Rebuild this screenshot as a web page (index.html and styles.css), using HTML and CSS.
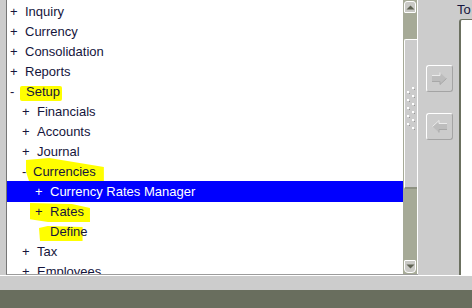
FILE: index.html
```html
<!DOCTYPE html>
<html>
<head>
<meta charset="utf-8">
<link rel="stylesheet" href="styles.css">
</head>
<body>
<div class="screen">
  <div class="main">
    <div class="gutter"></div>
    <div class="tree">
      <ul class="list">
        <li class="row l0"><span class="sign">+</span><span class="label">Inquiry</span></li>
        <li class="row l0"><span class="sign">+</span><span class="label">Currency</span></li>
        <li class="row l0"><span class="sign">+</span><span class="label">Consolidation</span></li>
        <li class="row l0"><span class="sign">+</span><span class="label">Reports</span></li>
        <li class="row l0 open"><span class="sign">-</span><span class="label mark mark-setup">Setup</span></li>
        <li class="row l1"><span class="sign">+</span><span class="label">Financials</span></li>
        <li class="row l1"><span class="sign">+</span><span class="label">Accounts</span></li>
        <li class="row l1"><span class="sign">+</span><span class="label">Journal</span></li>
        <li class="row l1 open"><span class="sign">-</span><span class="label mark mark-currencies">Currencies</span></li>
        <li class="row l2 selected"><span class="sign">+</span><span class="label">Currency Rates Manager</span></li>
        <li class="row l2"><span class="sign">+</span><span class="label mark mark-rates">Rates</span></li>
        <li class="row l2"><span class="sign"></span><span class="label mark mark-define">Define</span></li>
        <li class="row l1"><span class="sign">+</span><span class="label">Tax</span></li>
        <li class="row l1"><span class="sign">+</span><span class="label">Employees</span></li>
      </ul>
      <div class="scrollbar">
        <div class="sb-btn sb-up">
          <svg width="9" height="5" viewBox="0 0 9 5"><path d="M0.5 4.5 L4.5 0.5 L8.5 4.5 Z" fill="#5e6252"/></svg>
        </div>
        <div class="sb-track sb-track-top"></div>
        <div class="sb-thumb">
          <svg class="grip" width="10" height="46" viewBox="0 0 10 46">
            <g fill="#ffffff">
              <rect x="6" y="0" width="2" height="2"/><rect x="1" y="4" width="2" height="2"/>
              <rect x="6" y="8" width="2" height="2"/><rect x="1" y="12" width="2" height="2"/>
              <rect x="6" y="16" width="2" height="2"/><rect x="1" y="20" width="2" height="2"/>
              <rect x="6" y="24" width="2" height="2"/><rect x="1" y="28" width="2" height="2"/>
              <rect x="6" y="32" width="2" height="2"/><rect x="1" y="36" width="2" height="2"/>
              <rect x="6" y="40" width="2" height="2"/>
            </g>
            <g fill="#9a9a9a">
              <rect x="8" y="2" width="1" height="1"/><rect x="3" y="6" width="1" height="1"/>
              <rect x="8" y="10" width="1" height="1"/><rect x="3" y="14" width="1" height="1"/>
              <rect x="8" y="18" width="1" height="1"/><rect x="3" y="22" width="1" height="1"/>
              <rect x="8" y="26" width="1" height="1"/><rect x="3" y="30" width="1" height="1"/>
              <rect x="8" y="34" width="1" height="1"/><rect x="3" y="38" width="1" height="1"/>
              <rect x="8" y="42" width="1" height="1"/>
            </g>
          </svg>
        </div>
        <div class="sb-track sb-track-bottom"></div>
        <div class="sb-btn sb-down">
          <svg width="9" height="5" viewBox="0 0 9 5"><path d="M0.5 0.5 L8.5 0.5 L4.5 4.5 Z" fill="#5e6252"/></svg>
        </div>
      </div>
    </div>
    <div class="side">
      <div class="move-buttons">
        <div class="move-btn">
          <svg width="25" height="25" viewBox="0 0 25 25">
            <path d="M5 9.5 H13 V6.5 L19.5 12.5 L13 18.5 V15.5 H5 Z" fill="#bdbdbd"/>
            <path d="M5 9.5 H13 V6.5" fill="none" stroke="#ececec" stroke-width="1"/>
            <path d="M19.5 12.5 L13 18.5 V15.5 H5" fill="none" stroke="#a8a8a8" stroke-width="1"/>
          </svg>
        </div>
        <div class="move-btn">
          <svg width="25" height="25" viewBox="0 0 25 25">
            <path d="M20 9.5 H12 V6.5 L5.5 12.5 L12 18.5 V15.5 H20 Z" fill="#bdbdbd"/>
            <path d="M20 9.5 H12 V6.5 L5.5 12.5" fill="none" stroke="#ececec" stroke-width="1"/>
            <path d="M12 18.5 V15.5 H20" fill="none" stroke="#a8a8a8" stroke-width="1"/>
          </svg>
        </div>
      </div>
      <div class="to-panel">
        <div class="to-label">To</div>
        <div class="to-box"></div>
      </div>
    </div>
  </div>
  <div class="band"></div>
  <div class="footer"></div>
</div>
</body>
</html>
```

FILE: styles.css
```css
* { box-sizing: border-box; }

html, body {
  margin: 0;
  padding: 0;
  background: #cccccc;
}

body {
  font-family: "Liberation Sans", Arial, sans-serif;
  font-size: 13px;
}

.screen {
  width: 472px;
  height: 308px;
  display: flex;
  flex-direction: column;
  overflow: hidden;
}

.main {
  height: 276px;
  flex-shrink: 0;
  display: flex;
  border-bottom: 1px solid #ffffff;
}

.gutter {
  width: 6px;
  flex-shrink: 0;
  background: #cccccc;
}

.tree {
  width: 412px;
  flex-shrink: 0;
  display: flex;
  border-left: 1px solid #767676;
  border-bottom: 1px solid #9c9c9c;
  background: #ffffff;
}

.list {
  list-style: none;
  margin: 0;
  padding: 2px 0 0 0;
  width: 396px;
  flex-shrink: 0;
  overflow: hidden;
}

.row {
  height: 20px;
  display: flex;
  align-items: center;
  color: #15153c;
  white-space: nowrap;
}

.row.l0 { padding-left: 3px; }
.row.l1 { padding-left: 15px; }
.row.l2 { padding-left: 28px; }

.sign {
  width: 15px;
  line-height: 20px;
  position: relative;
  z-index: 1;
}

.row.l1.open .sign { width: 11px; }
.row.l0.open .sign { width: 16px; }

.label {
  line-height: 20px;
}

.row.selected {
  background: #0000ff;
  color: #ffffff;
  height: 21px;
  margin-top: -1px;
}

/* highlighter marks */
.mark {
  position: relative;
  z-index: 0;
}

.mark::before {
  content: "";
  position: absolute;
  z-index: -1;
  background: #ffff00;
}

.mark-setup::before {
  top: 4px; bottom: 1px; left: -6px; right: -2px;
  border-radius: 2px;
}

.mark-currencies::before {
  top: -4px; bottom: 1px; left: -7px; right: -8px;
  clip-path: polygon(0 2px, 30% 0, 100% 9px, 100% 100%, 3px 100%, 0 60%);
}

.mark-rates::before {
  top: 1px; bottom: 0; left: -20px; right: -6px;
  clip-path: polygon(0 0, 70% 1px, 100% 5px, 100% 100%, 30% 100%, 0 85%);
}

.mark-define::before {
  top: 4px; bottom: 1px; left: -11px; right: 5px;
  clip-path: polygon(0 2px, 20% 0, 100% 1px, 100% 100%, 1px 100%);
}

/* scrollbar */
.scrollbar {
  width: 15px;
  flex-shrink: 0;
  display: flex;
  flex-direction: column;
  background: #a6aa97;
  border-right: 1px solid #ffffff;
}

.sb-btn {
  height: 12px;
  flex-shrink: 0;
  margin: 1px 1px 0 1px;
  background: #c9c9c5;
  border: 1px solid #ffffff;
  border-radius: 3px 3px 1px 1px;
  display: flex;
  align-items: center;
  justify-content: center;
}

.sb-down {
  margin: 0 1px 1px 1px;
  height: 13px;
  border-radius: 1px 1px 4px 4px;
}

.sb-track-top { height: 26px; flex-shrink: 0; }
.sb-track-bottom { flex: 1; }

.sb-thumb {
  height: 150px;
  flex-shrink: 0;
  margin: 0 0 0 1px;
  background: #cccccc;
  border: 1px solid #ffffff;
  border-right: none;
  border-bottom: 2px solid #8e9282;
  border-radius: 2px 0 0 0;
  display: flex;
  justify-content: center;
  padding-top: 47px;
}

.grip { display: block; }

/* side panel */
.side {
  flex: 1;
  min-width: 0;
  display: flex;
  background: #cccccc;
  overflow: hidden;
}

.move-buttons {
  width: 27px;
  flex-shrink: 0;
  margin-left: 8px;
  padding-top: 65px;
  display: flex;
  flex-direction: column;
  gap: 21px;
}

.move-btn {
  width: 27px;
  height: 27px;
  border: 1px solid #ffffff;
  border-right-color: #a4a4a4;
  border-bottom-color: #a4a4a4;
  border-radius: 3px;
  display: flex;
  align-items: center;
  justify-content: center;
}

.to-panel {
  flex: 1;
  min-width: 0;
  margin-left: 4px;
  display: flex;
  flex-direction: column;
}

.to-label {
  height: 19px;
  line-height: 19px;
  color: #15153c;
  white-space: nowrap;
}

.to-box {
  flex: 1;
  margin-left: 2px;
  background: #ffffff;
  border-left: 2px solid #6b7060;
  border-top: 1px solid #6b7060;
  border-radius: 3px 0 0 0;
}

.band {
  height: 14px;
  flex-shrink: 0;
  background: #cccccc;
}

.footer {
  flex: 1;
  background: #696e5e;
}
```
